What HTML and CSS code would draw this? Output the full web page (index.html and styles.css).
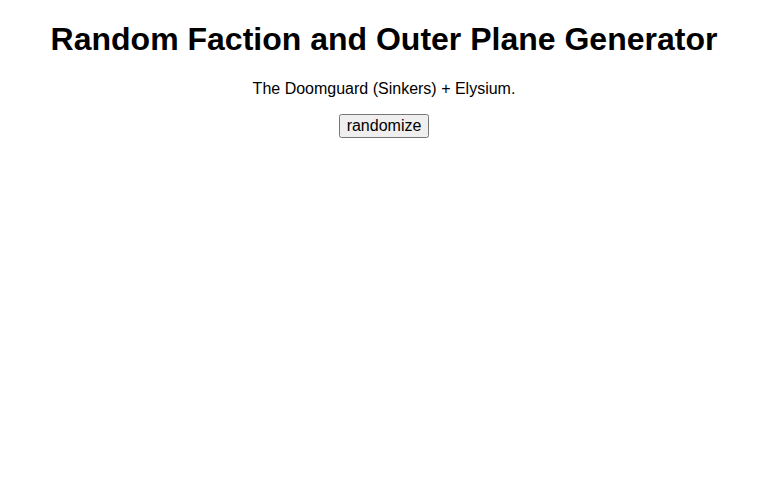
FILE: index.html
```html
<!DOCTYPE html>
<html>
<head>
<meta charset="utf-8">
<link rel="stylesheet" href="styles.css">
</head>
<body class="page">
<h1 class="title">Random Faction and Outer Plane Generator</h1>
<p class="result">The Doomguard (Sinkers) + Elysium.</p>
<div class="actions"><button class="btn">randomize</button></div>
</body>
</html>
```
FILE: styles.css
```css
.page {
  margin: 0 8px 8px;
  font-family: "Liberation Sans", Arial, sans-serif;
  text-align: center;
  background: #fff;
  color: #000;
}
.title {
  font-size: 32px;
  font-weight: bold;
  margin: 21.44px 0;
}
.result {
  font-size: 16px;
  margin: 16px 0;
}
.btn {
  font-family: "Liberation Sans", Arial, sans-serif;
  font-size: 16px;
}
```
